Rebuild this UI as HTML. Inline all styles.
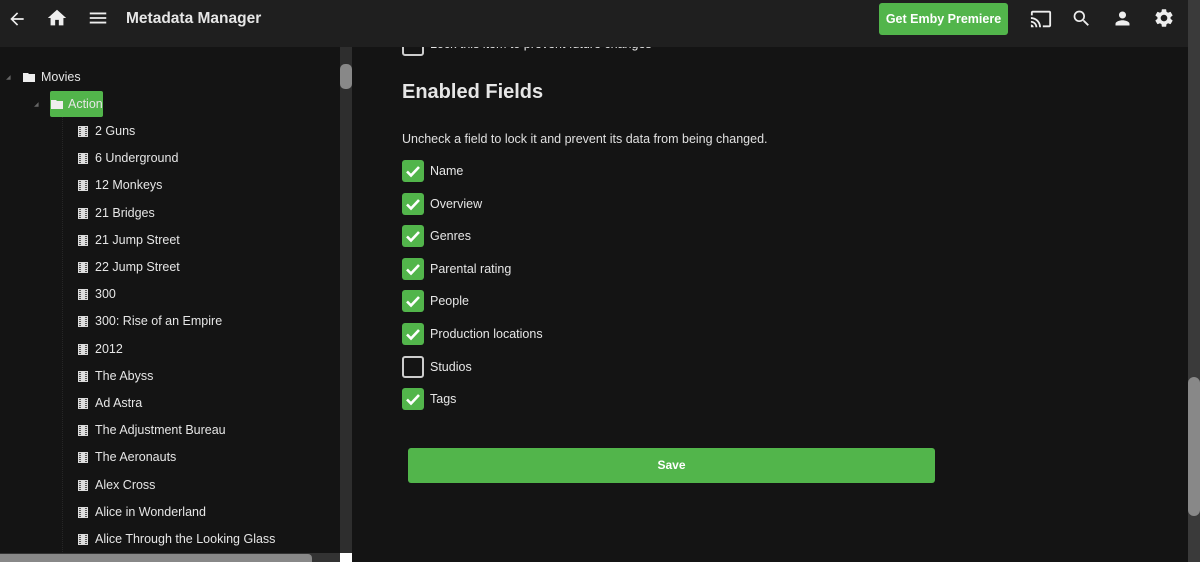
<!DOCTYPE html>
<html><head><meta charset="utf-8"><style>
*{margin:0;padding:0;box-sizing:border-box}
body{width:1200px;height:562px;overflow:hidden;background:#141414;font-family:"Liberation Sans",Arial,sans-serif;color:#e6e6e6;position:relative}
.hdr{position:absolute;left:0;top:0;width:1188px;height:47px;background:#1f1f1f}
.title{position:absolute;left:126px;top:10px;font-size:15.5px;font-weight:bold;color:#e6e6e6}
.prem{position:absolute;left:879px;top:3px;width:129px;height:32px;background:#52b54b;border-radius:3px;color:#fff;font-weight:bold;font-size:12.5px;text-align:center;line-height:32px}
.ic{position:absolute}
.tree{position:absolute;left:0;top:47px;width:340px;height:515px;background:#141414}
.row{position:absolute;font-size:12.5px;color:#e6e6e6;white-space:nowrap}
.film{position:absolute;left:78px;width:10px;height:11px;background:#ddd}
.film:before,.film:after{content:"";position:absolute;top:1px;width:2px;height:9px;background:repeating-linear-gradient(#555 0 1px,#ddd 1px 2px)}
.film:before{left:1px}.film:after{right:1px}
.vs{position:absolute;left:340px;top:47px;width:12px;height:515px;background:#2e2e2e}
.main{position:absolute;left:402px}
.cb{position:absolute;left:402px;width:22px;height:22px;border-radius:3px;background:#52b54b}
.cb.off{background:none;border:2px solid #ccc}
.lbl{position:absolute;left:430px;font-size:12.5px;color:#e6e6e6}
</style></head><body>
<div class="tree">
<div class="row" style="left:6px;top:27px;font-size:6px;color:#666">◢</div>
<svg class="ic" style="left:23px;top:25px" width="12" height="10"><path d="M0 1h5l1 1h6v8H0z" fill="#eee"/></svg>
<div class="row" style="left:41px;top:23px">Movies</div>
<div class="row" style="left:34px;top:54px;font-size:6px;color:#666">◢</div>
<div style="position:absolute;left:50px;top:44px;width:53px;height:26px;background:#52b54b;border-radius:2px"></div>
<svg class="ic" style="left:51px;top:52px" width="12" height="10"><path d="M0 1h5l1 1h6v8H0z" fill="#eee"/></svg>
<div class="row" style="left:68px;top:50px">Action</div>
<div style="position:absolute;left:62px;top:70px;height:445px;border-left:1px dotted #262626"></div>
</div>
<div id="items"></div>
<div class="vs"><div style="position:absolute;left:0;top:17px;width:12px;height:25px;background:#888;border-radius:5px"></div></div>
<div style="position:absolute;left:0;top:553px;width:340px;height:9px;background:#333"></div>
<div style="position:absolute;left:0;top:554px;width:312px;height:8px;background:#888;border-radius:0 4px 0 0"></div>
<div style="position:absolute;left:340px;top:553px;width:12px;height:9px;background:#fff"></div>

<div style="position:absolute;left:402px;top:34px;width:22px;height:22px;border:2px solid #ccc;border-radius:3px"></div>
<div class="main" style="left:430px;top:37px;font-size:12.5px;color:#e6e6e6">Lock this item to prevent future changes</div>

<div class="hdr">
<svg class="ic" style="left:7px;top:9px" width="20" height="20" viewBox="0 0 24 24"><path d="M20 11H7.8l5.6-5.6L12 4l-8 8 8 8 1.4-1.4L7.8 13H20z" fill="#eee"/></svg>
<svg class="ic" style="left:46px;top:7px" width="22" height="22" viewBox="0 0 24 24"><path d="M10 20v-6h4v6h5v-8h3L12 3 2 12h3v8z" fill="#eee"/></svg>
<svg class="ic" style="left:87px;top:7px" width="22" height="22" viewBox="0 0 24 24"><path d="M3 18h18v-2H3zm0-5h18v-2H3zm0-7v2h18V6z" fill="#eee"/></svg>
<div class="title">Metadata Manager</div>
<div class="prem">Get Emby Premiere</div>
<svg class="ic" style="left:1030px;top:8px" width="22" height="22" viewBox="0 0 24 24"><path d="M21 3H3c-1.1 0-2 .9-2 2v3h2V5h18v14h-7v2h7c1.1 0 2-.9 2-2V5c0-1.1-.9-2-2-2zM1 18v3h3c0-1.66-1.34-3-3-3zm0-4v2c2.76 0 5 2.240 5 5h2c0-3.87-3.13-7-7-7zm0-4v2c4.97 0 9 4.03 9 9h2c0-6.08-4.93-11-11-11z" fill="#eee"/></svg>
<svg class="ic" style="left:1071px;top:8px" width="21" height="21" viewBox="0 0 24 24"><path d="M15.5 14h-.79l-.28-.27A6.47 6.47 0 0016 9.5 6.5 6.5 0 109.5 16c1.61 0 3.09-.59 4.23-1.57l.27.28v.79l5 4.99L20.49 19l-4.99-5zm-6 0C7.01 14 5 11.990 5 9.5S7.01 5 9.5 5 14 7.01 14 9.5 11.99 14 9.5 14z" fill="#eee"/></svg>
<svg class="ic" style="left:1112px;top:8px" width="21" height="21" viewBox="0 0 24 24"><path d="M12 12c2.21 0 4-1.79 4-4s-1.79-4-4-4-4 1.79-4 4 1.79 4 4 4zm0 2c-2.67 0-8 1.34-8 4v2h16v-2c0-2.66-5.33-4-8-4z" fill="#eee"/></svg>
<svg class="ic" style="left:1153px;top:7px" width="22" height="22" viewBox="0 0 24 24"><path d="M19.14 12.94c.04-.3.06-.61.06-.94 0-.32-.02-.64-.07-.94l2.03-1.58a.49.49 0 00.12-.61l-1.92-3.32a.488.488 0 00-.59-.22l-2.39.96c-.5-.38-1.03-.7-1.62-.94l-.36-2.54a.484.484 0 00-.48-.41h-3.84c-.24 0-.43.17-.47.41l-.36 2.54c-.59.24-1.13.57-1.62.94l-2.39-.96c-.22-.08-.47 0-.59.22L2.74 8.87c-.12.21-.08.47.12.61l2.030 1.58c-.05.3-.09.63-.09.94s.02.64.07.94l-2.03 1.58a.49.49 0 00-.12.61l1.92 3.32c.12.22.37.29.59.22l2.39-.96c.5.38 1.03.7 1.62.94l.36 2.54c.05.24.24.41.48.41h3.84c.24 0 .44-.17.47-.41l.36-2.54c.59-.24 1.13-.56 1.62-.94l2.39.96c.22.08.47 0 .59-.22l1.92-3.32c.12-.22.07-.47-.12-.61l-2.01-1.58zM12 15.6c-1.98 0-3.6-1.62-3.6-3.6s1.62-3.6 3.6-3.6 3.6 1.62 3.6 3.6-1.62 3.6-3.6 3.6z" fill="#eee"/></svg>
</div>

<div class="main" style="top:81px;font-size:20px;font-weight:bold;color:#e6e6e6">Enabled Fields</div>
<div class="main" style="top:132px;font-size:12.5px;color:#e0e0e0">Uncheck a field to lock it and prevent its data from being changed.</div>
<div id="cbs"></div>
<div style="position:absolute;left:408px;top:448px;width:527px;height:35px;background:#52b54b;border-radius:3px;color:#fff;font-weight:bold;font-size:12px;text-align:center;line-height:35px">Save</div>

<div style="position:absolute;left:1188px;top:0;width:12px;height:562px;background:#3a3a3a"><div style="position:absolute;left:0;top:377px;width:12px;height:139px;background:#888;border-radius:6px"></div></div>

<script>
var items=["2 Guns","6 Underground","12 Monkeys","21 Bridges","21 Jump Street","22 Jump Street","300","300: Rise of an Empire","2012","The Abyss","Ad Astra","The Adjustment Bureau","The Aeronauts","Alex Cross","Alice in Wonderland","Alice Through the Looking Glass"];
var h="";items.forEach(function(t,i){var y=131+i*27.2;h+='<div class="film" style="top:'+(y-5)+'px"></div><div class="row" style="left:95px;top:'+(y-7)+'px">'+t+'</div>';});
document.getElementById("items").innerHTML=h;
var f=[["Name",1],["Overview",1],["Genres",1],["Parental rating",1],["People",1],["Production locations",1],["Studios",0],["Tags",1]];
h="";f.forEach(function(a,i){var y=160+i*32.6;h+='<div class="cb'+(a[1]?'':' off')+'" style="top:'+y+'px">'+(a[1]?'<svg width="22" height="22" viewBox="0 0 22 22"><path d="M5 11.5l4 4 8-8.5" stroke="#fff" stroke-width="2.6" fill="none"/></svg>':'')+'</div><div class="lbl" style="top:'+(y+4)+'px">'+a[0]+'</div>';});
document.getElementById("cbs").innerHTML=h;
</script>
</body></html>
